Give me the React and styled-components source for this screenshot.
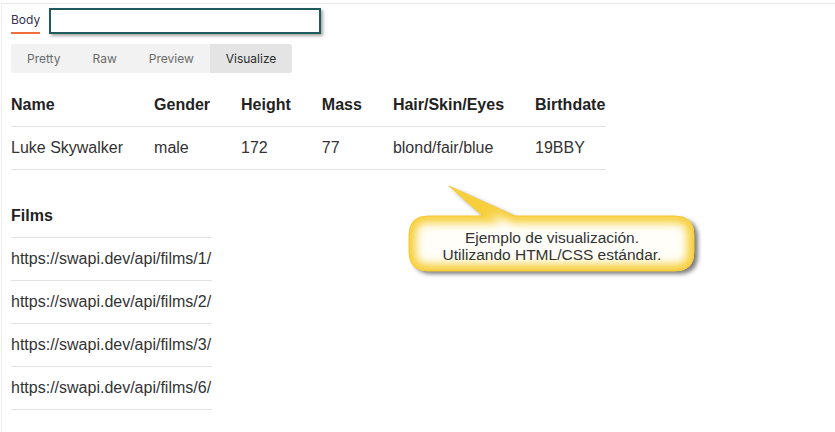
import React from 'react'
import styled, { createGlobalStyle } from 'styled-components'

const GlobalStyle = createGlobalStyle`
  html, body {
    margin: 0;
    padding: 0;
    background: #fff;
  }
  body {
    font-family: "Liberation Sans", Arial, sans-serif;
  }
`

const Page = styled.div`
  position: relative;
  width: 835px;
  height: 432px;
  padding-top: 3px;
  box-sizing: border-box;
  overflow: hidden;
`

const Frame = styled.div`
  height: 100%;
  margin-left: 1px;
  border-top: 1px solid #e8e8e8;
  border-left: 1px solid #efefef;
  padding: 4px 0 0 9px;
  box-sizing: border-box;
`

const TopRow = styled.div`
  display: flex;
  align-items: stretch;
  height: 26px;
`

const BodyTab = styled.div`
  font-family: Inter, "Noto Sans", sans-serif;
  font-size: 12px;
  color: #36304f;
  border-bottom: 2px solid #f26b3a;
  display: flex;
  align-items: center;
  padding-bottom: 1px;
  box-sizing: border-box;
`

const Input = styled.div`
  margin-left: 9px;
  width: 272px;
  height: 26px;
  border: 2px solid #1f5a5c;
  box-sizing: border-box;
  box-shadow: 2px 2px 3px rgba(0, 0, 0, 0.35);
  background: #fff;
`

const Segmented = styled.div`
  display: inline-flex;
  margin-top: 10px;
  height: 29px;
  background: #f2f2f2;
  border-radius: 3px;
  overflow: hidden;
`

const Segment = styled.div`
  font-family: Inter, "Noto Sans", sans-serif;
  font-size: 12px;
  padding: 0 16px;
  display: flex;
  align-items: center;
  color: ${p => (p.$active ? '#2e2e2e' : '#6b6b6b')};
  background: ${p => (p.$active ? '#e4e4e4' : 'transparent')};
`

const Table = styled.table`
  border-collapse: collapse;
  font-size: 16px;
  margin-top: ${p => p.$top}px;

  th, td {
    text-align: left;
    height: 42px;
    padding: 0 31px 0 0;
    border-bottom: 1px solid #e2e2e2;
    white-space: nowrap;
  }
  th:last-child, td:last-child {
    padding-right: 1px;
  }
  th {
    font-weight: bold;
    color: #222;
  }
  td {
    color: #333;
  }
`

const Callout = styled.div`
  position: absolute;
  left: 404px;
  top: 180px;
  width: 300px;
  height: 100px;
`

const Bubble = styled.svg`
  position: absolute;
  inset: 0;
`

const CalloutText = styled.div`
  position: relative;
  padding: 49px 0 0 5px;
  width: 286px;
  text-align: center;
  font-size: 15.5px;
  line-height: 17px;
  color: #333;
`

const people = [
  ['Luke Skywalker', 'male', '172', '77', 'blond/fair/blue', '19BBY'],
]

const films = [1, 2, 3, 6].map(n => `https://swapi.dev/api/films/${n}/`)

const bubblePath =
  'M 24 36 L 79 36 L 45 6 L 111 36 L 271 36 Q 290 36 290 55 L 290 72 Q 290 91 271 91 L 24 91 Q 5 91 5 72 L 5 55 Q 5 36 24 36 Z'

export default function App() {
  return (
    <Page>
      <GlobalStyle />
      <Frame>
        <TopRow>
          <BodyTab>Body</BodyTab>
          <Input />
        </TopRow>
        <Segmented>
          <Segment>Pretty</Segment>
          <Segment>Raw</Segment>
          <Segment>Preview</Segment>
          <Segment $active>Visualize</Segment>
        </Segmented>
        <Table $top={11}>
          <thead>
            <tr>
              <th>Name</th>
              <th>Gender</th>
              <th>Height</th>
              <th>Mass</th>
              <th>Hair/Skin/Eyes</th>
              <th>Birthdate</th>
            </tr>
          </thead>
          <tbody>
            {people.map(row => (
              <tr key={row[0]}>
                {row.map((c, i) => <td key={i}>{c}</td>)}
              </tr>
            ))}
          </tbody>
        </Table>
        <Table $top={25}>
          <thead>
            <tr><th>Films</th></tr>
          </thead>
          <tbody>
            {films.map(f => (
              <tr key={f}><td>{f}</td></tr>
            ))}
          </tbody>
        </Table>
      </Frame>
      <Callout>
        <Bubble width="300" height="100" viewBox="0 0 300 100">
          <defs>
            <clipPath id="bubbleClip">
              <path d={bubblePath} />
            </clipPath>
            <filter id="shadow" x="-10%" y="-20%" width="130%" height="150%">
              <feDropShadow dx="4" dy="3" stdDeviation="2.2" floodColor="#444" floodOpacity="0.7" />
            </filter>
            <filter id="glow" x="-10%" y="-20%" width="120%" height="140%">
              <feGaussianBlur stdDeviation="4" />
            </filter>
          </defs>
          <path d={bubblePath} fill="#fffef8" filter="url(#shadow)" />
          <g clipPath="url(#bubbleClip)">
            <path d={bubblePath} fill="none" stroke="#f7cf3a" strokeWidth="14" filter="url(#glow)" />
          </g>
          <path d={bubblePath} fill="none" stroke="#f5c933" strokeWidth="1" />
        </Bubble>
        <CalloutText>
          Ejemplo de visualización.<br />
          Utilizando HTML/CSS estándar.
        </CalloutText>
      </Callout>
    </Page>
  )
}
